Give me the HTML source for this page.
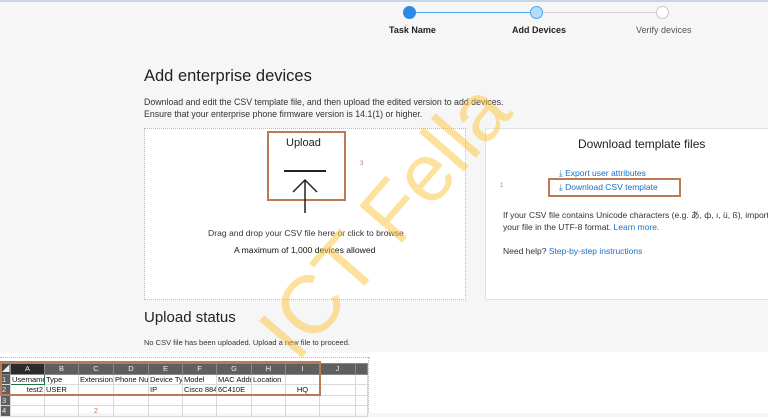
<!DOCTYPE html>
<html><head><meta charset="utf-8"><style>
*{margin:0;padding:0;box-sizing:border-box}
body{width:768px;height:413px;overflow:hidden;background:#f6f6f6;font-family:"Liberation Sans","Noto Sans CJK JP",sans-serif;color:#222;position:relative}
.a{position:absolute}
.lbl{font-size:9px;font-weight:bold;color:#222;white-space:nowrap}
.link{color:#1a6fc4}
table{border-collapse:collapse;font-size:8px;}
td{border:1px solid #d8d8d8;height:10.5px;line-height:9px;padding:0 1px;white-space:nowrap;overflow:hidden;font-size:7.5px;color:#111}
tr.h td{background:#5f5f5f;color:#eee;text-align:center;border-color:#888}
</style></head><body>
<div class="a" style="left:0;top:0;width:768px;height:2px;background:#c9d4e4"></div>
<div class="a" style="left:415px;top:12px;width:115px;height:1px;background:#4aa3ec"></div>
<div class="a" style="left:542px;top:12px;width:115px;height:1px;background:#d0d0d0"></div>
<div class="a" style="left:403px;top:6px;width:13px;height:13px;border-radius:50%;background:#2b8ae6"></div>
<div class="a" style="left:530px;top:6px;width:13px;height:13px;border-radius:50%;background:#b8dcfb;border:1.5px solid #4aa3ec"></div>
<div class="a" style="left:656px;top:6px;width:13px;height:13px;border-radius:50%;background:#fff;border:1.5px solid #c8c8c8"></div>
<div class="a lbl" style="left:389px;top:25px">Task Name</div>
<div class="a lbl" style="left:512px;top:25px">Add Devices</div>
<div class="a lbl" style="left:636px;top:25px;font-weight:normal;color:#555">Verify devices</div>

<div class="a" style="left:144px;top:67px;font-size:16.5px;color:#222">Add enterprise devices</div>
<div class="a" style="left:144px;top:96px;font-size:8.8px;line-height:12px;color:#333">Download and edit the CSV template file, and then upload the edited version to add devices.<br>Ensure that your enterprise phone firmware version is 14.1(1) or higher.</div>

<div class="a" style="left:144px;top:128px;width:322px;height:172px;background:#fff;border:1px dotted #bbb"></div>
<div class="a" style="left:267px;top:131px;width:79px;height:70px;border:2.5px solid #b97a55"></div>
<div class="a" style="left:286px;top:137px;font-size:11px;color:#222">Upload</div>
<div class="a" style="left:284px;top:170px;width:42px;height:1.5px;background:#222"></div>
<svg class="a" style="left:288px;top:178px" width="34" height="36" viewBox="0 0 34 36"><path d="M17 2V35M5 14L17 2L29 14" fill="none" stroke="#222" stroke-width="1.5"/></svg>
<div class="a" style="left:360px;top:161px;font-size:6px;color:#c07a50">3</div>
<div class="a" style="left:208px;top:228px;font-size:8.6px;color:#333">Drag and drop your CSV file here or click to browse</div>
<div class="a" style="left:234px;top:245px;font-size:8.6px;color:#111">A maximum of 1,000 devices allowed</div>

<div class="a" style="left:485px;top:128px;width:290px;height:172px;background:#fff;border:1px solid #e2e2e2"></div>
<div class="a" style="left:578px;top:137px;font-size:12px;color:#222">Download template files</div>
<div class="a link" style="left:559px;top:168px;font-size:8.5px">⤓ Export user attributes</div>
<div class="a" style="left:548px;top:178px;width:133px;height:19px;border:2.5px solid #b97a55"></div>
<div class="a link" style="left:559px;top:182px;font-size:8.5px">⤓ Download CSV template</div>
<div class="a" style="left:500px;top:183px;font-size:6px;color:#c07a50">1</div>
<div class="a" style="left:503px;top:209px;font-size:8.5px;line-height:12px;color:#333;white-space:nowrap">If your CSV file contains Unicode characters (e.g. あ, ф, ı, ü, ß), import<br>your file in the UTF-8 format. <span class="link">Learn more.</span></div>
<div class="a" style="left:503px;top:246px;font-size:8.5px;color:#333">Need help? <span class="link">Step-by-step instructions</span></div>

<div class="a" style="left:144px;top:309px;font-size:15px;color:#222">Upload status</div>
<div class="a" style="left:144px;top:338px;font-size:7.5px;color:#333">No CSV file has been uploaded. Upload a new file to proceed.</div>

<div class="a" style="left:0;top:352px;width:768px;height:61px;background:#fff"></div>
<div class="a" style="left:0;top:357px;width:370px;height:1px;border-top:1px dotted #bbb"></div>
<div class="a" style="left:368px;top:357px;width:1px;height:56px;border-left:1px dotted #bbb"></div>
<table class="a" style="left:0;top:363px;table-layout:fixed;width:367px">
<colgroup><col style="width:10px"><col style="width:34px"><col style="width:34px"><col style="width:35px"><col style="width:35px"><col style="width:34px"><col style="width:34px"><col style="width:35px"><col style="width:34px"><col style="width:34px"><col style="width:36px"><col style="width:12px"></colgroup>
<tr class="h"><td style="background:#444">◢</td><td style="background:#2b2b2b">A</td><td>B</td><td>C</td><td>D</td><td>E</td><td>F</td><td>G</td><td>H</td><td>I</td><td>J</td><td></td></tr>
<tr><td style="background:#5f5f5f;color:#eee">1</td><td style="border:1px solid #217346">Username</td><td>Type</td><td>Extension</td><td>Phone Nur</td><td>Device Typ</td><td>Model</td><td>MAC Addr</td><td>Location</td><td></td><td></td><td></td></tr>
<tr><td style="background:#5f5f5f;color:#eee">2</td><td style="text-align:right">test2</td><td>USER</td><td></td><td></td><td>IP</td><td>Cisco 8845</td><td>6C410E</td><td></td><td style="text-align:center">HQ</td><td></td><td></td></tr>
<tr><td style="background:#5f5f5f;color:#eee">3</td><td></td><td></td><td></td><td></td><td></td><td></td><td></td><td></td><td></td><td></td><td></td></tr>
<tr><td style="background:#5f5f5f;color:#eee">4</td><td></td><td></td><td style="text-align:center;color:#c07a50">2</td><td></td><td></td><td></td><td></td><td></td><td></td><td></td><td></td></tr>
</table>
<div class="a" style="left:0;top:361px;width:321px;height:35px;border:2.5px solid #b97a55"></div>

<div class="a" style="left:185px;top:180px;width:400px;font-size:82px;line-height:82px;color:rgba(252,196,60,0.5);transform:rotate(-49deg);transform-origin:50% 50%;white-space:nowrap;text-align:center">ICT Fella</div>
</body></html>
